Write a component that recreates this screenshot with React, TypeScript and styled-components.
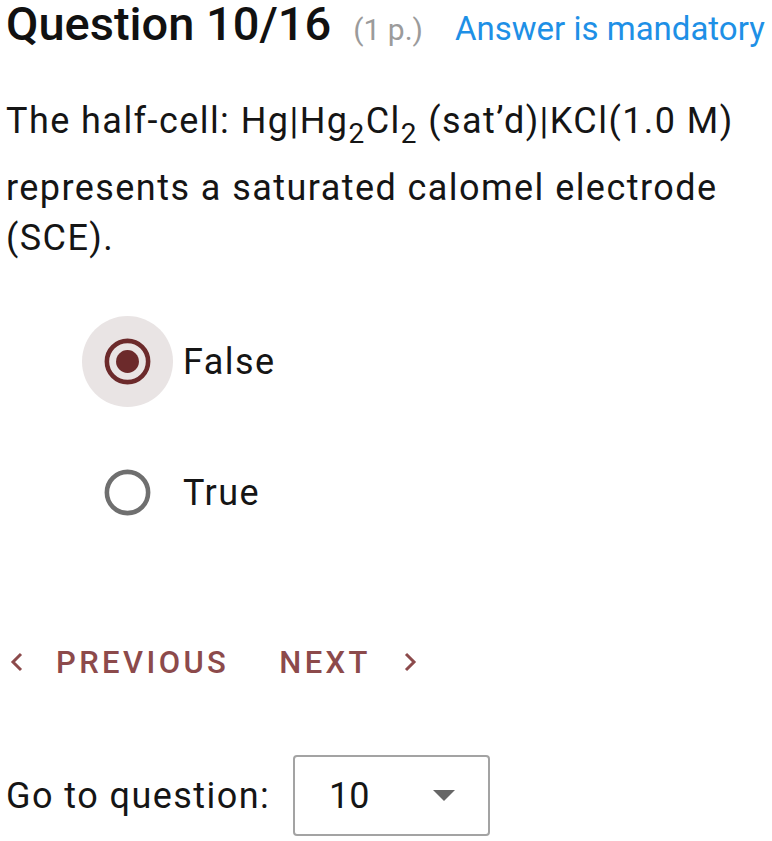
import styled, { createGlobalStyle } from "styled-components";

const GlobalStyle = createGlobalStyle`
  body {
    margin: 0;
    background: #fff;
    font-family: Roboto, "Noto Sans", sans-serif;
    color: #151515;
  }
`;

const Page = styled.div`
  width: 772px;
  padding-left: 6px;
  box-sizing: border-box;
`;

const Header = styled.div`
  display: flex;
  align-items: baseline;
  height: 48px;
  line-height: 48px;
  white-space: nowrap;
`;

const Title = styled.h1`
  margin: 0;
  font-size: 47px;
  font-weight: 500;
  color: #111;
`;

const Points = styled.span`
  margin-left: 22px;
  font-size: 30px;
  color: #9b9b9b;
`;

const Mandatory = styled.span`
  margin-left: 32px;
  font-size: 33px;
  color: #1e90e6;
`;

const Question = styled.p`
  margin: 48px 0 0;
  font-size: 36px;
  line-height: 50px;
  letter-spacing: 0.04em;
`;

const Sub = styled.sub`
  font-size: 28px;
  line-height: 58px;
  vertical-align: -10px;
`;

const Options = styled.div`
  display: flex;
  flex-direction: column;
  gap: 40px;
  margin-top: 53px;
  padding-left: 76px;
`;

const Option = styled.label`
  display: flex;
  align-items: center;
  gap: 10px;
  height: 91px;
  cursor: pointer;
`;

const Halo = styled.span<{ $active?: boolean }>`
  display: flex;
  align-items: center;
  justify-content: center;
  width: 91px;
  height: 91px;
  border-radius: 50%;
  background: ${(p) => (p.$active ? "#e9e4e4" : "transparent")};
`;

const OptionText = styled.span`
  font-size: 36px;
  letter-spacing: 0.04em;
`;

const Nav = styled.div`
  display: flex;
  align-items: center;
  gap: 50px;
  height: 60px;
  margin-top: 94px;
  padding-left: 4px;
`;

const NavButton = styled.button`
  display: flex;
  align-items: center;
  gap: 33px;
  padding: 0;
  border: 0;
  background: none;
  font-family: inherit;
  font-size: 31px;
  font-weight: 500;
  letter-spacing: 0.11em;
  color: #8c4a4b;
  cursor: pointer;
`;

const GotoRow = styled.div`
  display: flex;
  align-items: center;
  gap: 23px;
  margin-top: 63px;
`;

const GotoLabel = styled.span`
  font-size: 36px;
  letter-spacing: 0.04em;
`;

const Select = styled.div`
  display: flex;
  align-items: center;
  justify-content: space-between;
  width: 197px;
  height: 81px;
  box-sizing: border-box;
  padding: 0 33px 0 34px;
  border: 2px solid #a3a3a3;
  border-radius: 4px;
  font-size: 36px;
`;

const Radio = ({ checked }: { checked: boolean }) => (
  <svg width="55" height="55" viewBox="0 0 24 24">
    <circle
      cx="12"
      cy="12"
      r="9"
      fill="none"
      stroke={checked ? "#6c2a2b" : "#6f6f6f"}
      strokeWidth="2"
    />
    {checked && <circle cx="12" cy="12" r="5" fill="#6c2a2b" />}
  </svg>
);

const Chevron = ({ dir }: { dir: "left" | "right" }) => (
  <svg width="13" height="20" viewBox="0 0 13 20">
    <polyline
      points={dir === "left" ? "11,2 3,10 11,18" : "2,2 10,10 2,18"}
      fill="none"
      stroke="#8c4a4b"
      strokeWidth="3"
    />
  </svg>
);

const options = [
  { label: "False", checked: true },
  { label: "True", checked: false },
];

const App = () => (
  <Page>
    <GlobalStyle />
    <Header>
      <Title>Question 10/16</Title>
      <Points>(1 p.)</Points>
      <Mandatory>Answer is mandatory</Mandatory>
    </Header>

    <Question>
      The half-cell: Hg|Hg<Sub>2</Sub>Cl<Sub>2</Sub> (sat’d)|KCl(1.0 M)
      represents a saturated calomel electrode (SCE).
    </Question>

    <Options>
      {options.map((o) => (
        <Option key={o.label}>
          <Halo $active={o.checked}>
            <Radio checked={o.checked} />
          </Halo>
          <OptionText>{o.label}</OptionText>
        </Option>
      ))}
    </Options>

    <Nav>
      <NavButton>
        <Chevron dir="left" />
        PREVIOUS
      </NavButton>
      <NavButton>
        NEXT
        <Chevron dir="right" />
      </NavButton>
    </Nav>

    <GotoRow>
      <GotoLabel>Go to question:</GotoLabel>
      <Select>
        <span>10</span>
        <svg width="22" height="11" viewBox="0 0 22 11">
          <polygon points="0,0 22,0 11,11" fill="#666" />
        </svg>
      </Select>
    </GotoRow>
  </Page>
);

export default App;
